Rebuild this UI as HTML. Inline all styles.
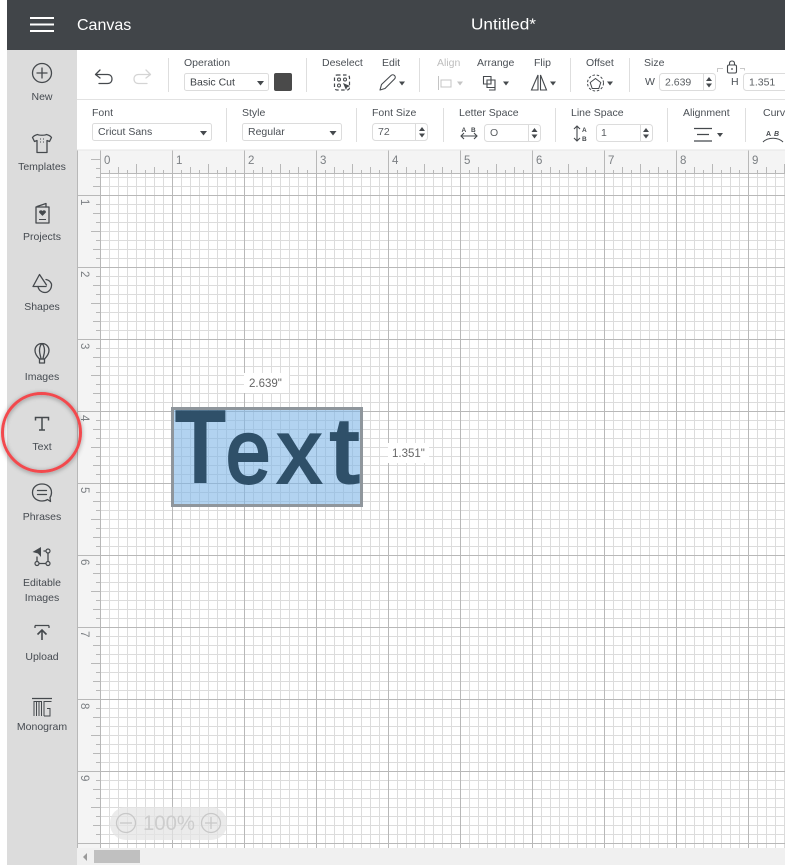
<!DOCTYPE html>
<html><head><meta charset="utf-8"><title>Canvas</title>
<style>
html,body{margin:0;padding:0;background:#fff;width:785px;height:865px;overflow:hidden}
svg{display:block}
text{font-family:"Liberation Sans",sans-serif}
.l{font-size:10.5px;fill:#4a4f55}
.s{font-size:10.5px;fill:#454a50;text-anchor:middle}
.v{font-size:10.5px;fill:#4a4f55}
.n{font-size:11.5px;fill:#7b7f83}
.i{fill:none;stroke:#45494d;stroke-width:1.3;stroke-linecap:round;stroke-linejoin:round}
.t{fill:none;stroke:#45494d;stroke-width:1.1}
.box{fill:#fff;stroke:#dcdcdc;stroke-width:1}
.div{stroke:#dedede;stroke-width:1}
.a{fill:#45494d}
</style></head><body>
<svg width="785" height="865" viewBox="0 0 785 865" xmlns="http://www.w3.org/2000/svg">
<defs>
<pattern id="minor" x="100" y="195" width="9" height="9" patternUnits="userSpaceOnUse"><path d="M.5 0V9M0 .5H9" fill="none" stroke="#dcdcdc" stroke-width="1"/></pattern>
<pattern id="major" x="100" y="195" width="72" height="72" patternUnits="userSpaceOnUse"><path d="M.5 0V72M0 .5H72" fill="none" stroke="#b8b8b8" stroke-width="1"/></pattern>
<pattern id="tt" x="100" y="150" width="72" height="24" patternUnits="userSpaceOnUse"><path d="M.5 0V24M9.5 20V24M18.5 17V24M27.5 20V24M36.5 14V24M45.5 20V24M54.5 17V24M63.5 20V24" fill="none" stroke="#b8b8b8"/></pattern>
<pattern id="lt" x="77" y="195" width="24" height="72" patternUnits="userSpaceOnUse"><path d="M0 .5H24M19 9.5H24M16 18.5H24M19 27.5H24M14 36.5H24M19 45.5H24M16 54.5H24M19 63.5H24" fill="none" stroke="#b8b8b8"/></pattern>
<filter id="sh" x="-30%" y="-30%" width="160%" height="160%"><feDropShadow dx="0" dy="1" stdDeviation="2.5" flood-color="#000" flood-opacity=".4"/></filter>
</defs>

<!-- base -->
<rect x="0" y="0" width="785" height="865" fill="#fff"/>
<rect x="7" y="0" width="778" height="50" fill="#414549"/>
<rect x="7" y="50" width="70" height="815" fill="#dcdcdc"/>
<path d="M30 18H54M30 24.500H54M30 31H54" stroke="#fff" stroke-width="2"/>
<text x="77" y="30" font-size="16" fill="#fff">Canvas</text>
<text x="471" y="29.500" font-size="16" fill="#fff" textLength="65" lengthAdjust="spacingAndGlyphs">Untitled*</text>

<!-- canvas -->
<rect x="77" y="150" width="708" height="715" fill="#fff"/>
<rect x="100" y="173" width="685" height="692" fill="url(#minor)"/>
<rect x="100" y="173" width="685" height="692" fill="url(#major)"/>
<rect x="100" y="150" width="685" height="24" fill="#f4f4f4"/>
<rect x="77" y="150" width="23" height="715" fill="#f4f4f4"/>
<rect x="100" y="150" width="685" height="24" fill="url(#tt)"/>
<rect x="77" y="195" width="24" height="660" fill="url(#lt)"/>
<path d="M100 173.500H785" stroke="#b8b8b8"/>
<path d="M77.500 150V865" stroke="#b8b8b8"/>
<path d="M100.500 150V195" stroke="#b8b8b8"/>
<path d="M91 159.500H100M96 168.500H100M96 177.500H100M93 186.500H100" stroke="#b8b8b8"/>
<rect x="77" y="149.500" width="708" height="1" fill="#e6e6e6"/>

<text class="n" x="104" y="164">0</text><text class="n" x="176" y="164">1</text><text class="n" x="248" y="164">2</text><text class="n" x="320" y="164">3</text><text class="n" x="392" y="164">4</text><text class="n" x="464" y="164">5</text><text class="n" x="536" y="164">6</text><text class="n" x="608" y="164">7</text><text class="n" x="680" y="164">8</text><text class="n" x="752" y="164">9</text>
<g class="n">
<text class="n" transform="translate(81,199) rotate(90)">1</text>
<text class="n" transform="translate(81,271) rotate(90)">2</text>
<text class="n" transform="translate(81,343) rotate(90)">3</text>
<text class="n" transform="translate(81,415) rotate(90)">4</text>
<text class="n" transform="translate(81,487) rotate(90)">5</text>
<text class="n" transform="translate(81,559) rotate(90)">6</text>
<text class="n" transform="translate(81,631) rotate(90)">7</text>
<text class="n" transform="translate(81,703) rotate(90)">8</text>
<text class="n" transform="translate(81,775) rotate(90)">9</text>
</g>

<!-- selection -->
<rect x="172.500" y="408.500" width="189" height="97" fill="#7fb6e6" fill-opacity=".6" stroke="#8f969c" stroke-width="3"/>
<g fill="#2f5069" stroke="#2f5069">
<text transform="translate(174.500,483) scale(.8,1)" font-size="106" font-weight="700" stroke-width="0">T</text>
<text transform="translate(226,482.500) scale(.85,.96)" font-size="94" stroke-width="3">e</text>
<text transform="translate(277.500,482.500) scale(.93,.96)" font-size="94" stroke-width="3">x</text>
<text transform="translate(330,482.500) scale(1.1,.98)" font-size="94" stroke-width="3">t</text>
</g>
<rect x="244" y="373" width="45" height="20" fill="#fff"/>
<text x="249" y="387" font-size="11.5" fill="#666">2.639"</text>
<rect x="388" y="443" width="41" height="20" fill="#fff"/>
<text x="392" y="457" font-size="11.500" fill="#666">1.351"</text>

<!-- zoom control -->
<rect x="110" y="807" width="117" height="33" rx="16" fill="#e4e4e4" fill-opacity=".75"/>
<g fill="none" stroke="#c8c8c8" stroke-width="1.300">
<circle cx="126" cy="823" r="9.500"/><path d="M120 823H132"/>
<circle cx="211" cy="823" r="9.500"/><path d="M205 823H217M211 817V829"/>
</g>
<text x="143" y="830" font-size="21" fill="#cdcdcd" textLength="52" lengthAdjust="spacingAndGlyphs">100%</text>

<!-- scrollbar -->
<rect x="77" y="848" width="708" height="17" fill="#f0f0f0"/>
<rect x="94" y="850" width="46" height="13" fill="#c0c0c0"/>
<path d="M87 853V861L83 857Z" fill="#9a9a9a"/>

<!-- toolbar divider rows -->
<path d="M77 99.500H785" stroke="#e2e2e2"/>
<g class="div">
<path d="M168.500 58V92M306.500 58V92M419.500 58V92M570.500 58V92M629.500 58V92"/>
<path d="M226.500 108V142M356.500 108V142M443.500 108V142M555.500 108V142M667.500 108V142M745.500 108V142"/>
</g>

<!-- row 1 -->
<path class="i" d="M100 70L95.500 74.500L100 78M96 74.500H107.500C110.500 74.500 112 76.500 112 79C112 81.500 110.500 83.500 107.500 83.500H99"/>
<path class="i" style="stroke:#d4d4d4" d="M146 70L150.500 74.500L146 78M150 74.500H138.500C135.500 74.500 134 76.500 134 79C134 81.500 135.500 83.500 138.500 83.500H147"/>
<text class="l" x="184" y="66">Operation</text>
<rect class="box" x="184.500" y="73.500" width="84" height="17" rx="2"/>
<text class="v" x="190" y="85.500" style="fill:#3c4045">Basic Cut</text>
<path class="a" d="M257 81H264L260.500 85.500Z"/>
<rect x="274" y="73" width="18" height="18" rx="2" fill="#4a4a4a"/>
<text class="l" x="322" y="66">Deselect</text>
<rect x="334.500" y="75" width="15" height="15" rx="2.500" fill="none" stroke="#45494d" stroke-width="1.200" stroke-dasharray="3.500 2.500"/>
<g fill="none" stroke="#45494d" stroke-width="1"><circle cx="339" cy="79.500" r="1.500"/><circle cx="345" cy="79.500" r="1.500"/><circle cx="339" cy="85.500" r="1.500"/></g>
<path class="a" d="M343 83L350 86L347 87.500L346 90Z"/>
<text class="l" x="382" y="66">Edit</text>
<path d="M380 90L381.500 84.500L391 75.500C392 74.500 393.500 74.500 394.500 75.500C395.500 76.500 395.500 78 394.500 79L385 88.500Z" fill="none" stroke="#45494d" stroke-width="1.100" stroke-linejoin="round"/>
<path class="a" d="M399 81.500H405L402 85.500Z"/>

<text class="l" x="437" y="66" style="fill:#bdbdbd">Align</text>
<path d="M438.500 76V90M441 80H451V87H441Z" fill="none" stroke="#c4c4c4" stroke-width="1"/>
<path d="M457 81.500H463L460 85.500Z" fill="#c4c4c4"/>
<text class="l" x="477" y="66">Arrange</text>
<path class="t" d="M483.500 76.500H491V84H483.500ZM487 80H495V87.500H487ZM495 87.500V90H489"/>
<path class="a" d="M503 81.500H509L506 85.500Z"/>
<text class="l" x="534" y="66">Flip</text>
<path class="t" d="M538 75L531.500 90H538ZM540.500 75V90H546.500Z"/>
<path class="a" d="M550 81.500H556L553 85.500Z"/>
<text class="l" x="586" y="66">Offset</text>
<path d="M595.500 78.500L600.800 82.500L598.800 88.500H592.200L590.200 82.500Z" fill="none" stroke="#45494d" stroke-width="1"/>
<circle cx="595.500" cy="83" r="8" fill="none" stroke="#45494d" stroke-width="1" stroke-dasharray="2.500 1.800"/>
<path class="a" d="M607 81.500H613L610 85.500Z"/>
<text class="l" x="644" y="66">Size</text>
<text class="l" x="645" y="85">W</text>
<rect class="box" x="659.500" y="73.500" width="56" height="17" rx="3"/>
<text x="665" y="85.500" font-size="10.500" fill="#5a5e62">2.639</text>
<path d="M703.500 74V90" stroke="#dcdcdc"/>
<path class="a" d="M706 81L709 77L712 81ZM706 83.500H712L709 87.500Z"/>
<path d="M717.500 72V68.500H723M740 68.500H744.500V70.500" fill="none" stroke="#c8c8c8"/>
<rect x="727.500" y="65" width="9" height="8" rx="1.500" fill="none" stroke="#45494d" stroke-width="1.100"/>
<path d="M729.500 65V63.500C729.500 62 730.500 61 732 61C733.500 61 734.500 62 734.500 63.500V65" fill="none" stroke="#45494d" stroke-width="1.100"/>
<circle cx="732" cy="69" r=".9" fill="#45494d"/>
<text class="l" x="731" y="85">H</text>
<rect class="box" x="743.500" y="73.500" width="60" height="17" rx="3"/>
<text x="749" y="85.500" font-size="10.500" fill="#5a5e62">1.351</text>

<!-- row 2 -->
<text class="l" x="92" y="116">Font</text>
<rect class="box" x="92.500" y="123.500" width="119" height="17" rx="2"/>
<text class="v" x="98" y="135">Cricut Sans</text>
<path class="a" d="M200 131H207L203.500 135.500Z"/>
<text class="l" x="242" y="116">Style</text>
<rect class="box" x="242.500" y="123.500" width="99" height="17" rx="2"/>
<text class="v" x="248" y="135">Regular</text>
<path class="a" d="M329.500 131H336.500L333 135.500Z"/>
<text class="l" x="372" y="116">Font Size</text>
<rect class="box" x="372.500" y="123.500" width="55" height="17" rx="3"/>
<text x="378" y="135" font-size="10.500" fill="#5a5e62">72</text>
<path d="M415.500 124V140" stroke="#dcdcdc"/>
<path class="a" d="M419 131L422 127L425 131ZM419 133.500H425L422 137.500Z"/>

<text class="l" x="459" y="116">Letter Space</text>
<text x="461.500" y="132" font-size="6.500" font-weight="700" fill="#45494d">A</text><text x="471" y="132" font-size="6.500" font-weight="700" fill="#45494d">B</text>
<path class="t" d="M461 136H477M464 133L461 136L464 139M474 133L477 136L474 139"/>
<rect class="box" x="484.500" y="124.500" width="56" height="17" rx="3"/>
<text x="490" y="136" font-size="10.500" fill="#5a5e62">O</text>
<path d="M528.500 125V141" stroke="#dcdcdc"/>
<path class="a" d="M531.500 132L534.500 128L537.500 132ZM531.500 134.500H537.500L534.500 138.500Z"/>
<text class="l" x="571" y="116">Line Space</text>
<path class="t" d="M577 126V141M574 129L577 126L580 129M574 138L577 141L580 138"/>
<text x="582" y="132" font-size="6.500" font-weight="700" fill="#45494d">A</text><text x="582" y="141" font-size="6.500" font-weight="700" fill="#45494d">B</text>
<rect class="box" x="596.500" y="124.500" width="56" height="17" rx="3"/>
<text x="601" y="136" font-size="10.500" fill="#5a5e62">1</text>
<path d="M640.500 125V141" stroke="#dcdcdc"/>
<path class="a" d="M643 132L646 128L649 132ZM643 134.500H649L646 138.500Z"/>
<text class="l" x="683" y="116">Alignment</text>
<path d="M694 128.500H712M697 134.500H709M694 141H712" stroke="#45494d" stroke-width="1.200"/>
<path class="a" d="M717 133H723L720 137Z"/>
<text class="l" x="763" y="116">Curve</text>
<text x="766" y="136" font-size="7" font-weight="700" fill="#45494d">A</text><text x="774" y="136" font-size="7" font-style="italic" font-weight="700" fill="#45494d">B</text>
<path class="t" d="M763 142C768 137 778 137 783 142"/>

<!-- sidebar icons -->
<circle class="i" cx="42" cy="73" r="9.500"/><path class="i" d="M37 73H47M42 68V78"/>
<text class="s" x="42" y="100">New</text>

<path class="i" d="M37.500 134.500C35.500 135 33.500 136 32.500 137.500L34.500 141.500L37 140.500V152.500H47V140.500L49.500 141.500L51.500 137.500C50.500 136 48.500 135 46.500 134.500C45 135.500 39 135.500 37.500 134.500Z"/>
<path d="M40 139H41M43 139H44M40 142H41M43 142H44" stroke="#45494d" stroke-width="1"/>
<text class="s" x="42" y="170">Templates</text>

<rect class="i" x="36" y="207" width="13" height="16"/>
<path class="i" d="M37 206.500L46 203.500V207"/>
<path d="M42.500 215.500L39.500 212.500C39 210.500 41.500 210 42.500 211.500C43.500 210 46 210.500 45.500 212.500Z" fill="#45494d" stroke="#45494d" stroke-width=".6"/>
<path d="M39 219.500H46" stroke="#45494d"/>
<text class="s" x="42" y="240">Projects</text>

<path class="i" d="M38 286.500H33L39.500 274.500L46.500 285"/>
<path class="i" d="M38 286.500H46"/>
<path class="i" d="M51.500 284C52 289 48.500 292.500 45 292.500C41.500 292.500 38.500 290 38 286.500M46 279.500C48.500 280 50.500 281.500 51.500 284"/>
<text class="s" x="42" y="310">Shapes</text>

<path class="i" d="M42 343.500C38 343.500 35 346.500 35 350.500C35 354 38 357.500 39.500 359H44.500C46 357.500 49 354 49 350.500C49 346.500 46 343.500 42 343.500ZM42 343.500C40 345.500 39.500 348 39.500 350.500C39.500 354 41 357 41 359M42 343.500C44 345.500 44.500 348 44.500 350.500C44.500 354 43 357 43 359"/>
<rect class="i" x="39.500" y="359" width="5" height="4"/>
<text class="s" x="42" y="380">Images</text>

<path d="M35.500 420.500V417.500H48.500V420.500M42 417.500V430M39 430H45" fill="none" stroke="#45494d" stroke-width="1.500"/>
<text class="s" x="42" y="450">Text</text>

<path class="i" d="M42 484C36.500 484 32.500 487.500 32.500 492.500C32.500 497.500 36.500 501 42 501C44 501 46 500.500 47.500 499.500L50.500 501.500L50 497.500C51 496 51.500 494.500 51.500 492.500C51.500 487.500 47.500 484 42 484Z"/>
<path class="i" d="M37.500 490.500H46.500M37.500 494.500H46.500"/>
<text class="s" x="42" y="520">Phrases</text>

<path class="a" d="M32.500 552L41 547V557L38 553.500Z"/>
<path class="i" d="M37 557V563.500M39 563.500H46M48 553V561.500M44 551H46"/>
<g fill="#dcdcdc" stroke="#45494d" stroke-width="1.200"><circle cx="37" cy="563.500" r="2"/><circle cx="48" cy="563.500" r="2"/><circle cx="48" cy="551" r="2"/></g>
<text class="s" x="42" y="586">Editable</text>
<text class="s" x="42" y="601">Images</text>

<path d="M35 625.500H49M35 625.500V628M49 625.500V628" fill="none" stroke="#45494d" stroke-width="1.300"/>
<path d="M42 640V630M37.500 634.500L42 630L46.500 634.500" fill="none" stroke="#45494d" stroke-width="1.600"/>
<text class="s" x="42" y="660">Upload</text>

<path d="M32 698.500H52" stroke="#45494d" stroke-width="1.300"/>
<path d="M34 716V701.500H41.500V716M36.500 716V702M39 716V702M44 716V701.500H51.500M44 716H50V708.500H47" fill="none" stroke="#45494d" stroke-width="1"/>
<text class="s" x="42" y="730">Monogram</text>

<!-- highlight circle -->
<circle cx="41.500" cy="432.500" r="39" fill="none" stroke="#f2494e" stroke-width="3" filter="url(#sh)"/>
</svg>
</body></html>
